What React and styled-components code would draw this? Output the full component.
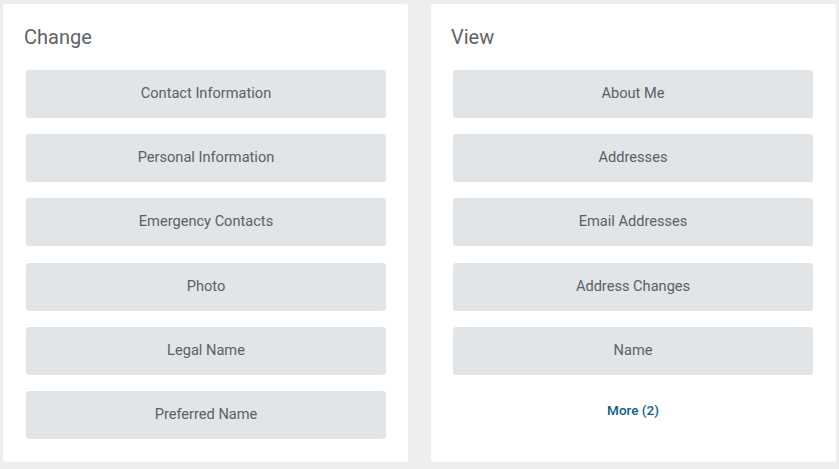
import React from "react";
import styled, { createGlobalStyle } from "styled-components";

const Global = createGlobalStyle`
  html, body { margin: 0; padding: 0; background: #edeef0; }
  body { font-family: Roboto, "Liberation Sans", Arial, sans-serif; }
`;

const Page = styled.div`
  display: grid;
  grid-template-columns: 405px 405px;
  column-gap: 23px;
  padding: 4px 3px 7px 3px;
`;

const Card = styled.section`
  background: #ffffff;
  border-radius: 3px;
  padding: 21px ${(p) => (p.$right ? "23px" : "22px")} 23px
    ${(p) => (p.$right ? "22px" : "23px")};
  display: flex;
  flex-direction: column;
`;

const Title = styled.h2`
  margin: 0 0 21px -2px;
  font-size: 20px;
  line-height: 24px;
  font-weight: 400;
  color: #5f6368;
`;

const List = styled.div`
  display: flex;
  flex-direction: column;
  gap: 16.2px;
`;

const Button = styled.button`
  height: 48px;
  width: 100%;
  border: none;
  border-radius: 3px;
  background: #e1e5e8;
  color: #5b6066;
  font-family: Roboto, "Liberation Sans", Arial, sans-serif;
  font-size: 14.6px;
  line-height: 18px;
  cursor: pointer;
  padding: 0 0 2px 0;
`;

const More = styled.a`
  align-self: center;
  margin-top: 27px;
  font-size: 13.5px;
  font-weight: 500;
  line-height: 16px;
  color: #0d5e94;
  text-decoration: none;
  cursor: pointer;
`;

const change = [
  "Contact Information",
  "Personal Information",
  "Emergency Contacts",
  "Photo",
  "Legal Name",
  "Preferred Name",
];
const view = ["About Me", "Addresses", "Email Addresses", "Address Changes", "Name"];

export default function App() {
  return (
    <>
      <Global />
      <Page>
        <Card>
          <Title>Change</Title>
          <List>
            {change.map((t) => (
              <Button key={t}>{t}</Button>
            ))}
          </List>
        </Card>
        <Card $right>
          <Title>View</Title>
          <List>
            {view.map((t) => (
              <Button key={t}>{t}</Button>
            ))}
          </List>
          <More>More (2)</More>
        </Card>
      </Page>
    </>
  );
}
